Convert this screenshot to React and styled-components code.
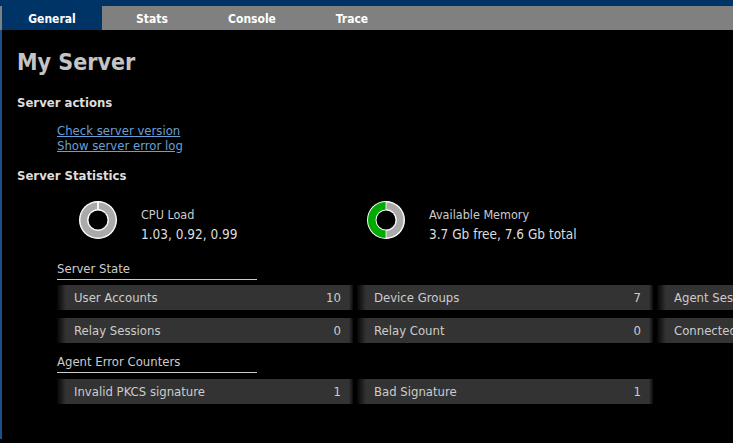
import React from 'react';
import styled, { createGlobalStyle } from 'styled-components';

const GlobalStyle = createGlobalStyle`
  html, body {
    margin: 0;
    padding: 0;
    background: #000;
    overflow: hidden;
  }
  body {
    font-family: "DejaVu Sans Condensed", "DejaVu Sans", sans-serif;
    color: #ccc;
  }
`;

const Page = styled.div`
  width: 733px;
  height: 443px;
  overflow: hidden;
  background: #000;
`;

const TopBar = styled.div`
  height: 6px;
  background: #003366;
`;

const TabBar = styled.div`
  display: flex;
  height: 24px;
  background: #808080;
  padding-left: 2px;
`;

const Tab = styled.div`
  width: 100px;
  display: flex;
  align-items: center;
  justify-content: center;
  padding-top: 1px;
  box-sizing: border-box;
  font-size: 12px;
  font-weight: bold;
  color: #fff;
  background: ${(p) => (p.$active ? '#003366' : 'transparent')};
`;

const Content = styled.div`
  height: 409px;
  border-left: 2px solid #1c4f8e;
  padding-left: 15px;
  overflow: hidden;
`;

const Title = styled.h1`
  margin: 18px 0 0;
  font-size: 23px;
  line-height: 28px;
  font-weight: bold;
  color: #c4c4c4;
`;

const SectionTitle = styled.div`
  margin-top: ${(p) => p.$top}px;
  font-size: 13px;
  line-height: 16px;
  font-weight: bold;
  color: #ddd;
`;

const Links = styled.div`
  margin: 12px 0 0 40px;
  display: flex;
  flex-direction: column;
`;

const Link = styled.a`
  font-size: 13px;
  line-height: 15px;
  color: #6a9fd4;
  text-decoration: underline;
  cursor: pointer;
`;

const StatsRow = styled.div`
  display: flex;
  margin: 16px 0 0 61px;
`;

const Stat = styled.div`
  width: 288px;
  display: flex;
  align-items: center;
  gap: 23px;
`;

const StatText = styled.div`
  display: flex;
  flex-direction: column;
  margin: 5px 0 -5px;
`;

const StatLabel = styled.div`
  font-size: 12.5px;
  line-height: 18px;
  color: #ccc;
`;

const StatValue = styled.div`
  font-size: 13.5px;
  line-height: 21px;
  color: #ddd;
`;

const Group = styled.div`
  margin-left: 40px;
`;

const GroupTitle = styled.div`
  width: 200px;
  margin-top: ${(p) => p.$top}px;
  padding-bottom: 2px;
  border-bottom: 1px solid #ccc;
  font-size: 13px;
  line-height: 17px;
  color: #ccc;
`;

const Row = styled.div`
  display: flex;
  margin-top: ${(p) => p.$top}px;
  width: 1000px;
`;

const Cell = styled.div`
  flex: none;
  width: 296px;
  height: 25px;
  margin-right: 4px;
  box-sizing: border-box;
  display: flex;
  align-items: center;
  justify-content: space-between;
  padding: 0 12px 0 17px;
  font-size: 13px;
  color: #ccc;
  background: linear-gradient(
    to right,
    #050505 0,
    #333 9px,
    #333 calc(100% - 4px),
    #0c0c0c 100%
  );
`;

function sector(cx, cy, r1, r2, a0, a1) {
  const pt = (r, a) => {
    const rad = ((a - 90) * Math.PI) / 180;
    return [cx + r * Math.cos(rad), cy + r * Math.sin(rad)];
  };
  const large = a1 - a0 > 180 ? 1 : 0;
  const [x0, y0] = pt(r2, a0);
  const [x1, y1] = pt(r2, a1);
  const [x2, y2] = pt(r1, a1);
  const [x3, y3] = pt(r1, a0);
  return `M${x0} ${y0} A${r2} ${r2} 0 ${large} 1 ${x1} ${y1} L${x2} ${y2} A${r1} ${r1} 0 ${large} 0 ${x3} ${y3} Z`;
}

function Donut({ used }) {
  const split = 360 * used;
  return (
    <svg width="40" height="40" viewBox="0 0 40 40">
      <circle cx="20" cy="20" r="19" fill="#fff" />
      {used > 0 && (
        <path d={sector(20, 20, 10.5, 18, 360 - split, 359.99)} fill="#0a0" />
      )}
      <path d={sector(20, 20, 10.5, 18, 0.01, 360 - split - 0.01)} fill="#aaa" stroke="#fff" strokeWidth="0.8" />
      {used === 0 && <line x1="20" y1="1.5" x2="20" y2="11" stroke="#fff" strokeWidth="1.2" />}
      <circle cx="20" cy="20" r="9.5" fill="#000" />
    </svg>
  );
}

const serverState = [
  [
    ['User Accounts', 10],
    ['Device Groups', 7],
    ['Agent Sessions', 0]
  ],
  [
    ['Relay Sessions', 0],
    ['Relay Count', 0],
    ['Connected Intel® AMT', 0]
  ]
];

const agentErrors = [
  [
    ['Invalid PKCS signature', 1],
    ['Bad Signature', 1]
  ]
];

function Cells({ rows, first }) {
  return rows.map((row, i) => (
    <Row key={i} $top={i === 0 ? first : 8}>
      {row.map(([label, value]) => (
        <Cell key={label}>
          <span>{label}</span>
          <span>{value}</span>
        </Cell>
      ))}
    </Row>
  ));
}

export default function App() {
  return (
    <Page>
      <GlobalStyle />
      <TopBar />
      <TabBar>
        <Tab $active>General</Tab>
        <Tab>Stats</Tab>
        <Tab>Console</Tab>
        <Tab>Trace</Tab>
      </TabBar>
      <Content>
        <Title>My Server</Title>
        <SectionTitle $top={19}>Server actions</SectionTitle>
        <Links>
          <Link>Check server version</Link>
          <Link>Show server error log</Link>
        </Links>
        <SectionTitle $top={15}>Server Statistics</SectionTitle>
        <StatsRow>
          <Stat>
            <Donut used={0} />
            <StatText>
              <StatLabel>CPU Load</StatLabel>
              <StatValue>1.03, 0.92, 0.99</StatValue>
            </StatText>
          </Stat>
          <Stat>
            <Donut used={0.5} />
            <StatText>
              <StatLabel>Available Memory</StatLabel>
              <StatValue>3.7 Gb free, 7.6 Gb total</StatValue>
            </StatText>
          </Stat>
        </StatsRow>
        <Group>
          <GroupTitle $top={20}>Server State</GroupTitle>
          <Cells rows={serverState} first={5} />
          <GroupTitle $top={10}>Agent Error Counters</GroupTitle>
          <Cells rows={agentErrors} first={6} />
        </Group>
      </Content>
    </Page>
  );
}
